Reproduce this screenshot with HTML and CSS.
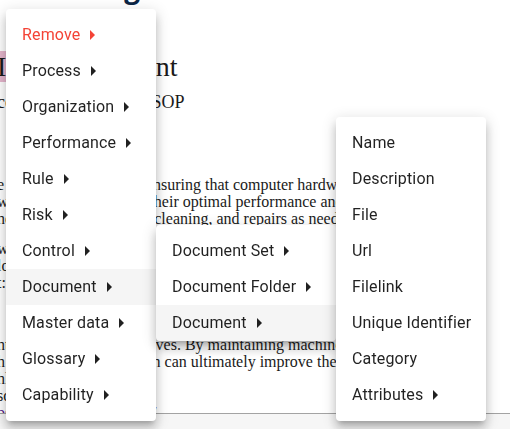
FILE: index.html
```html
<!DOCTYPE html>
<html lang="en">
<head>
<meta charset="utf-8">
<title>Unit Maintenance SOP</title>
<link rel="stylesheet" href="styles.css">
</head>
<body>
<div class="page">
  <div class="brand">Rendering</div>
  <h1 class="title"><span class="mark">I</span> PC Equipment</h1>
  <p class="subtitle">ce Unit Maintenance SOP</p>
  <p class="para p1">e guide is designed for ensuring that computer hardware is maintained<br>workstations operate at their optimal performance and efficiency<br>necessary updates, deep cleaning, and repairs as needed.</p>
  <p class="para p2">weekly checks on every workstation and server in the office.<br>logs of all maintenance work must be kept and reviewed monthly.<br>t: the IT desk handles all hardware requests and repairs.</p>
  <p class="para p3">nt failures in the hard drives. By maintaining machines regularly,<br>h limits downtime, which can ultimately improve the overall<br>hly efficient.<br>sources:<br><a class="ref-link" href="#">https://www.itdesk.org/sop/</a></p>
</div>

<footer class="footer"></footer>

<ul class="menu menu-main">
  <li class="item danger">Remove<svg class="caret" viewBox="0 0 24 24"><path d="M10 17l5-5-5-5z"/></svg></li>
  <li class="item">Process<svg class="caret" viewBox="0 0 24 24"><path d="M10 17l5-5-5-5z"/></svg></li>
  <li class="item">Organization<svg class="caret" viewBox="0 0 24 24"><path d="M10 17l5-5-5-5z"/></svg></li>
  <li class="item">Performance<svg class="caret" viewBox="0 0 24 24"><path d="M10 17l5-5-5-5z"/></svg></li>
  <li class="item">Rule<svg class="caret" viewBox="0 0 24 24"><path d="M10 17l5-5-5-5z"/></svg></li>
  <li class="item">Risk<svg class="caret" viewBox="0 0 24 24"><path d="M10 17l5-5-5-5z"/></svg></li>
  <li class="item">Control<svg class="caret" viewBox="0 0 24 24"><path d="M10 17l5-5-5-5z"/></svg></li>
  <li class="item active">Document<svg class="caret" viewBox="0 0 24 24"><path d="M10 17l5-5-5-5z"/></svg></li>
  <li class="item">Master data<svg class="caret" viewBox="0 0 24 24"><path d="M10 17l5-5-5-5z"/></svg></li>
  <li class="item">Glossary<svg class="caret" viewBox="0 0 24 24"><path d="M10 17l5-5-5-5z"/></svg></li>
  <li class="item">Capability<svg class="caret" viewBox="0 0 24 24"><path d="M10 17l5-5-5-5z"/></svg></li>
</ul>

<ul class="menu menu-sub">
  <li class="item">Document Set<svg class="caret" viewBox="0 0 24 24"><path d="M10 17l5-5-5-5z"/></svg></li>
  <li class="item">Document Folder<svg class="caret" viewBox="0 0 24 24"><path d="M10 17l5-5-5-5z"/></svg></li>
  <li class="item active">Document<svg class="caret" viewBox="0 0 24 24"><path d="M10 17l5-5-5-5z"/></svg></li>
</ul>

<ul class="menu menu-fields">
  <li class="item">Name</li>
  <li class="item">Description</li>
  <li class="item">File</li>
  <li class="item">Url</li>
  <li class="item">Filelink</li>
  <li class="item">Unique Identifier</li>
  <li class="item">Category</li>
  <li class="item">Attributes<svg class="caret" viewBox="0 0 24 24"><path d="M10 17l5-5-5-5z"/></svg></li>
</ul>
</body>
</html>
```

FILE: styles.css
```css
* {
  box-sizing: border-box;
}

html,
body {
  margin: 0;
  padding: 0;
}

body {
  width: 510px;
  height: 429px;
  overflow: hidden;
  background: #ffffff;
  color: #1a1a1a;
  font-family: "Liberation Serif", "Times New Roman", serif;
}

.page {
  display: flow-root;
  margin-left: -3px;
}

.brand {
  margin-top: -27px;
  font-family: "Open Sans", "Liberation Sans", sans-serif;
  font-weight: 700;
  font-size: 28px;
  line-height: 28px;
  color: #0b2545;
}

.title {
  margin: 50px 0 0;
  font-size: 28px;
  line-height: 32px;
  font-weight: normal;
}

.mark {
  background: #e6b6cd;
}

.subtitle {
  margin: 8px 0 0;
  font-size: 18px;
  line-height: 22px;
}

.para {
  margin: 0;
  font-size: 16px;
  line-height: 17px;
}

.p1 {
  margin-top: 63px;
}

.p2 {
  margin-top: 13px;
}

.p3 {
  margin-top: 45px;
}

.ref-link {
  margin-left: -17px;
  color: #551a8b;
}

.footer {
  position: fixed;
  left: 0;
  right: 0;
  bottom: 0;
  height: 16px;
  border-top: 1px solid #a3a3a3;
  background: #f6f6f6;
}

.menu {
  position: absolute;
  margin: 0;
  padding: 8px 0;
  list-style: none;
  background: #ffffff;
  border-radius: 4px;
  box-shadow: 0 5px 5px -3px rgba(0, 0, 0, 0.2),
    0 8px 10px 1px rgba(0, 0, 0, 0.14),
    0 3px 14px 2px rgba(0, 0, 0, 0.12);
  font-family: Roboto, "Noto Sans", sans-serif;
  font-size: 16px;
  letter-spacing: 0.15px;
  color: rgba(0, 0, 0, 0.87);
}

.menu-main {
  left: 6px;
  top: 9px;
  width: 150px;
}

.menu-sub {
  left: 156px;
  top: 225px;
  width: 180px;
  height: 116px;
  padding-bottom: 0;
  overflow: hidden;
}

.menu-fields {
  left: 336px;
  top: 117px;
  width: 150px;
}

.item {
  display: flex;
  align-items: center;
  height: 36px;
  padding: 0 16px;
  line-height: 24px;
  white-space: nowrap;
}

.item.active {
  background: rgba(0, 0, 0, 0.04);
}

.item.danger {
  color: #f44336;
}

.caret {
  flex: none;
  width: 24px;
  height: 24px;
  fill: currentColor;
}
```
